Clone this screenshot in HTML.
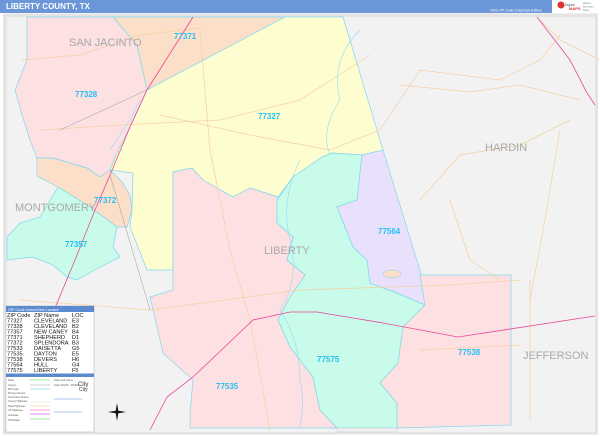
<!DOCTYPE html>
<html><head><meta charset="utf-8"><style>
html,body{margin:0;padding:0;width:600px;height:436px;overflow:hidden;background:#fff;font-family:"Liberation Sans",sans-serif}
svg{position:absolute;left:0;top:0}
</style></head><body>
<svg width="600" height="436" viewBox="0 0 600 436" xmlns="http://www.w3.org/2000/svg" font-family="Liberation Sans, sans-serif">
<rect x="0" y="0" width="600" height="13" fill="#6b97d8"/>
<rect x="552" y="0" width="48" height="13" fill="#fff"/>
<text x="6" y="9" font-size="8" font-weight="bold" fill="#fff">LIBERTY COUNTY, TX</text>
<text x="490" y="11.5" font-size="3.5" fill="#fff">2022 ZIP Code ColorCast Edition</text>
<circle cx="561" cy="5" r="3.5" fill="#d33"/>
<text x="565" y="6" font-size="3.5" fill="#555">Digital</text>
<text x="569" y="10" font-size="4" font-weight="bold" fill="#d33">MAPS</text>
<text x="583" y="4" font-size="2.5" fill="#888">Market</text>
<text x="583" y="7.5" font-size="2.5" fill="#888">Boundary</text>
<text x="583" y="11" font-size="2.5" fill="#888">Maps</text>
<rect x="3" y="13.5" width="595" height="421" fill="#e4e4e4"/>
<rect x="7" y="17" width="588" height="415" fill="#f2f2f2"/>
<g stroke="#7fd6ee" stroke-width="0.7">
<polygon fill="#fcdfc8" points="113,17 285,17 147,90 137,45"/>
<polygon fill="#fde0e2" points="27,17 113,17 137,45 147,90 130,127 117,153 110,170 100,177 87,168 53,158 37,158 30,140 22,115 15,90 27,60"/>
<polygon fill="#fefdd0" points="285,17 343,17 383,150 362,155 332,153 322,157 293,177 278,197 250,188 233,197 203,180 192,168 173,172 173,270 147,270 130,227 132,210 133,173 110,170 117,153 130,127 147,90"/>
<polygon fill="#fcdfc8" points="37,158 53,158 87,168 100,177 110,170 122,182 130,195 132,210 127,227 117,227 90,207 58,187 37,176"/>
<polygon fill="#c8fbe9" points="7,237 20,223 40,217 58,187 90,207 117,227 113,247 120,257 100,267 77,280 67,277 53,265 33,257 7,260"/>
<polygon fill="#fde0e2" points="173,172 192,168 203,180 233,197 250,188 278,197 277,200 277,223 293,237 287,260 305,275 290,297 278,320 290,347 313,377 320,410 337,428 190,428 190,413 193,380 163,353 150,297 173,290"/>
<polygon fill="#c8fbe9" points="293,177 322,157 332,153 362,155 357,200 337,207 353,247 367,260 370,283 397,293 425,305 403,327 398,363 380,383 397,403 397,428 337,428 320,410 313,377 290,347 278,320 290,297 305,275 287,260 293,237 277,223 277,200"/>
<polygon fill="#e9e1fb" points="362,155 383,150 422,277 425,305 397,293 370,283 367,260 353,247 337,207 357,200"/>
<polygon fill="#fde0e2" points="420,275 511,275 511,425 397,428 397,403 380,383 398,363 403,327 425,305"/>
</g>
<g fill="none" stroke="#f6cfa0" stroke-width="0.7">
<path d="M22,60 L80,55 L140,35 L200,28"/><path d="M40,130 L120,125 L220,120 L300,100 L370,55"/>
<path d="M160,115 L250,135 L330,150 L380,130 L420,70 L500,80 L540,60 L560,35"/>
<path d="M400,85 L470,92 L520,85 L580,100"/><path d="M420,200 L460,155 L520,145 L570,120"/>
<path d="M450,200 L470,260 L500,280"/><path d="M560,130 L545,220 L530,300"/>
<path d="M200,30 L210,150 L230,250 L250,320 L270,430"/><path d="M20,300 L150,310 L300,290 L450,285 L520,280"/>
<path d="M540,20 L560,40 L600,60"/><path d="M530,280 L530,420"/><path d="M420,350 L520,345"/>
</g>
<g fill="none" stroke="#8fdcf3" stroke-width="0.6">
<path d="M300,160 Q280,200 290,240 Q300,280 280,310 Q300,340 300,380 Q305,400 300,428"/>
<path d="M360,30 Q330,60 340,100 Q320,130 330,155"/>
<path d="M110,150 L130,120 L140,100"/>
</g>
<path d="M193,17 L147,90 L130,127 L110,175 L95,210 L75,260 L50,320 L45,340" fill="none" stroke="#e8479b" stroke-width="0.8"/>
<path d="M150,430 L167,397 L193,377 L253,320 L290,312 L317,312 L383,323 L458,337 L595,316" fill="none" stroke="#e8479b" stroke-width="0.8"/>
<path d="M537,17 L570,60 L587,93 L595,105" fill="none" stroke="#e8479b" stroke-width="0.8"/>
<path d="M110,175 L150,310" stroke="#999" stroke-width="0.5"/>
<path d="M147,90 L60,130" stroke="#999" stroke-width="0.5"/>
<ellipse cx="392" cy="274" rx="9" ry="4" fill="#fcdfc8" stroke="#7fd6ee" stroke-width="0.5"/>
<g fill="#a8a8a8" font-size="11">
<text x="69" y="46">SAN JACINTO</text><text x="15" y="211">MONTGOMERY</text>
<text x="485" y="151">HARDIN</text><text x="264" y="254">LIBERTY</text><text x="523" y="359">JEFFERSON</text>
</g>
<g fill="#27c0f4" font-size="8" font-weight="bold">
<text x="174" y="39">77371</text><text x="75" y="97">77328</text><text x="258" y="119">77327</text>
<text x="94" y="203">77372</text><text x="65" y="247">77357</text><text x="378" y="234">77564</text>
<text x="317" y="362">77575</text><text x="458" y="355">77538</text><text x="216" y="389">77535</text>
</g>
<rect x="6" y="306" width="88" height="126" fill="#fff" stroke="#aaa" stroke-width="0.5"/>
<rect x="6" y="306" width="88" height="6" fill="#5b8ad0"/>
<text x="8" y="311" font-size="4" fill="#fff">ZIP Code Index/Grid Locator</text>
<g font-size="5.6" fill="#111">
<text x="7" y="317">ZIP Code</text><text x="34" y="317">ZIP Name</text><text x="72" y="317">LOC</text>
<text x="7" y="322.5">77327</text><text x="34" y="322.5">CLEVELAND</text><text x="72" y="322.5">E3</text>
<text x="7" y="328">77328</text><text x="34" y="328">CLEVELAND</text><text x="72" y="328">B2</text>
<text x="7" y="333.5">77357</text><text x="34" y="333.5">NEW CANEY</text><text x="72" y="333.5">B4</text>
<text x="7" y="339">77371</text><text x="34" y="339">SHEPHERD</text><text x="72" y="339">D1</text>
<text x="7" y="344.5">77372</text><text x="34" y="344.5">SPLENDORA</text><text x="72" y="344.5">B3</text>
<text x="7" y="350">77533</text><text x="34" y="350">DAISETTA</text><text x="72" y="350">G5</text>
<text x="7" y="355.5">77535</text><text x="34" y="355.5">DAYTON</text><text x="72" y="355.5">E5</text>
<text x="7" y="361">77538</text><text x="34" y="361">DEVERS</text><text x="72" y="361">H6</text>
<text x="7" y="366.5">77564</text><text x="34" y="366.5">HULL</text><text x="72" y="366.5">G4</text>
<text x="7" y="372">77575</text><text x="34" y="372">LIBERTY</text><text x="72" y="372">F5</text>
</g>
<rect x="6" y="373.5" width="88" height="3.5" fill="#5b8ad0"/>
<g font-size="2.5" fill="#555">
<text x="8" y="381">State</text><text x="8" y="386">County</text><text x="8" y="390">ZIP Code</text>
<text x="8" y="394">Primary Streets</text><text x="8" y="398">Secondary Streets</text><text x="8" y="402">County Highways</text>
<text x="8" y="407">State Highways</text><text x="8" y="411">US Highways</text><text x="8" y="416">Interstate</text><text x="8" y="421">Toll Roads</text>
<text x="54" y="381">Cities and Towns</text><text x="54" y="386">Cities 50,000 - 99,999</text>
</g>
<g stroke-width="0.8">
<path d="M30,380 H50" stroke="#8d8"/><path d="M30,385 H50" stroke="#bbb"/><path d="M30,389 H50" stroke="#8de"/>
<path d="M30,402 H50" stroke="#eee"/><path d="M30,406 H50" stroke="#fc9"/><path d="M30,410 H50" stroke="#f8c"/>
<path d="M30,414 H50" stroke="#c6f"/><path d="M30,419 H50" stroke="#8d8"/>
<path d="M54,399 H82 M54,412 H82" stroke="#5b8ad0" stroke-width="0.5"/>
</g>
<text x="78" y="386" font-size="6" fill="#333">City</text><text x="79" y="391" font-size="5" fill="#333">City</text>
<g transform="translate(117,412)"><path d="M0,-9 L1.5,0 L0,9 L-1.5,0Z M-9,0 L0,-1.5 L9,0 L0,1.5Z" fill="#111"/></g>
<rect x="337" y="428" width="60" height="4" fill="#eee" stroke="#bbb" stroke-width="0.3"/>
</svg>
</body></html>
